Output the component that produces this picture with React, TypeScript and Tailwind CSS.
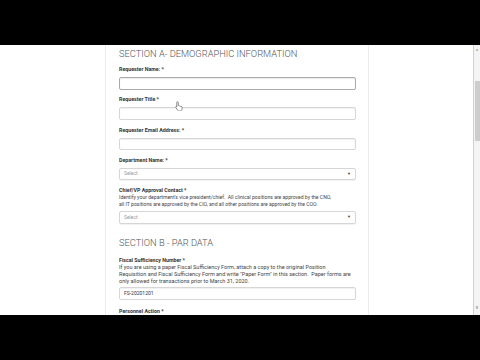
import React from "react";

function Label({ text }: { text: string }) {
    return (
        <div className="text-[5.3px] leading-[7px] font-bold text-[#333] whitespace-nowrap">
            {text}
        </div>
    );
}

function TextBox({ value, focused, top = "mt-[4px]" }: { value?: string; focused?: boolean; top?: string }) {
    return (
        <div
            className={
                (focused
                    ? "border-[#a9a9a9] shadow-[inset_0_1px_1px_rgba(0,0,0,0.08)] "
                    : "border-[#d6d6d6] shadow-[inset_0_1px_1px_rgba(0,0,0,0.06)] ") +
                top +
                " h-[12.5px] w-[237px] rounded-[2px] border bg-white flex items-center px-[4px] text-[5px] text-[#333]"
            }
        >
            {value}
        </div>
    );
}

function SelectBox() {
    return (
        <div className="mt-[4px] h-[12.5px] w-[237px] rounded-[2px] border border-[#d6d6d6] bg-white shadow-[0_1px_1px_rgba(0,0,0,0.06)] flex items-center justify-between px-[4px] text-[5px] text-[#9a9a9a]">
            <span>Select</span>
            <span className="text-[4px] text-[#444]">▼</span>
        </div>
    );
}

export default function App() {
    return (
        <div className="w-[480px] h-[360px] flex flex-col bg-black font-['Roboto',sans-serif] overflow-hidden">
            <div className="h-[45px] bg-black" />
            <div className="h-[270px] flex bg-white relative">
                <div className="flex-1 flex overflow-hidden">
                    <div className="ml-[105px] w-[264px] border-x border-[#ececec] pl-[13px] pt-[3px]">
                        <h2 className="text-[9.3px] leading-[12px] font-light text-[#555] whitespace-nowrap">
                            SECTION A- DEMOGRAPHIC INFORMATION
                        </h2>

                        <div className="mt-[6px]">
                            <Label text="Requester Name: *" />
                            <TextBox focused />
                        </div>
                        <div className="mt-[6.8px]">
                            <Label text="Requester Title *" />
                            <TextBox />
                        </div>
                        <div className="mt-[6.8px]">
                            <Label text="Requester Email Address: *" />
                            <TextBox />
                        </div>
                        <div className="mt-[6.8px]">
                            <Label text="Department Name: *" />
                            <SelectBox />
                        </div>
                        <div className="mt-[6.8px]">
                            <Label text="Chief/VP Approval Contact *" />
                            <p className="text-[5.1px] leading-[6.5px] text-[#444] whitespace-nowrap">
                                Identify your department's vice president/chief.&nbsp; All clinical positions are approved by the CNO,
                                <br />
                                all IT positions are approved by the CIO, and all other positions are approved by the COO.
                            </p>
                            <SelectBox />
                        </div>

                        <h2 className="mt-[13.5px] text-[9.3px] leading-[12px] font-light text-[#555] whitespace-nowrap">
                            SECTION B - PAR DATA
                        </h2>

                        <div className="mt-[7.5px]">
                            <Label text="Fiscal Sufficiency Number *" />
                            <p className="text-[5.5px] leading-[7px] text-[#444] whitespace-nowrap">
                                If you are using a paper Fiscal Sufficiency Form, attach a copy to the original Position
                                <br />
                                Requisition and Fiscal Sufficiency Form and write "Paper Form" in this section.&nbsp; Paper forms are
                                <br />
                                only allowed for transactions prior to March 31, 2020.
                            </p>
                            <TextBox value="FS-20201201" top="mt-[2.5px]" />
                        </div>
                        <div className="mt-[8px]">
                            <Label text="Personnel Action *" />
                        </div>
                    </div>
                </div>

                <div className="w-[7px] border-l border-[#d0d0d0] bg-[#f4f4f4] flex flex-col items-center">
                    <span className="text-[5px] leading-[8px] text-[#666] mt-[2px]">^</span>
                    <div className="mt-[26px] w-[5px] h-[60px] bg-[#cdcdcd]" />
                    <div className="flex-1" />
                    <span className="text-[5px] leading-[8px] text-[#666] mb-[4px]">v</span>
                </div>

                <svg className="absolute left-[175px] top-[56px]" width="8" height="10" viewBox="0 0 16 20">
                    <path
                        d="M5 1.5c.8 0 1.5.7 1.5 1.5v6l1-.2c.8 0 1.4.5 1.5 1.1l1-.1c.8 0 1.4.5 1.5 1.1l.9-.1c.9 0 1.6.7 1.6 1.6v3.4c0 2.4-1.9 4.2-4.2 4.2H8.4c-1.2 0-2.3-.5-3-1.5L1.6 13c-.5-.7-.3-1.6.4-2 .6-.4 1.4-.3 1.9.3l-.4-.1V3c0-.8.7-1.5 1.5-1.5z"
                        fill="white"
                        stroke="#444"
                        strokeWidth="1.2"
                    />
                </svg>
            </div>
            <div className="h-[45px] bg-black" />
        </div>
    );
}
